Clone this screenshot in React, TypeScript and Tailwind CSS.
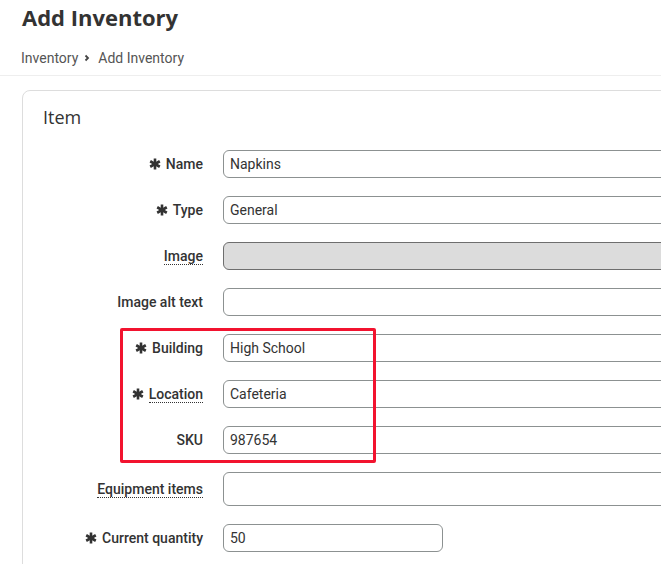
import React from "react";

function Star() {
  return (
    <svg width="12" height="12" viewBox="0 0 12 12" className="mr-[5px] shrink-0">
      <g stroke="#333" strokeWidth="2.6" strokeLinecap="butt">
        <line x1="6" y1="0.5" x2="6" y2="11.5" />
        <line x1="1.2" y1="3.25" x2="10.8" y2="8.75" />
        <line x1="1.2" y1="8.75" x2="10.8" y2="3.25" />
      </g>
    </svg>
  );
}

function Label({ text, req, dotted }: { text: string; req?: boolean; dotted?: boolean }) {
  return (
    <div className="w-[160px] shrink-0 flex justify-end items-center text-[14px] font-medium text-[#333]">
      {req && <Star />}
      <span className={dotted ? "border-b border-dotted border-[#333] leading-[16px]" : "leading-[16px]"}>{text}</span>
    </div>
  );
}

function Row({ label, req, dotted, value, disabled, tall, short }: { label: string; req?: boolean; dotted?: boolean; value?: string; disabled?: boolean; tall?: boolean; short?: boolean }) {
  return (
    <div className="flex items-center gap-[20px]">
      <Label text={label} req={req} dotted={dotted} />
      <div
        className={
          (short ? "w-[220px] " : "flex-1 ") +
          (tall ? "h-[34px] " : "h-[28px] ") +
          (disabled ? "bg-[#dcdcdc] border-[#6e6e6e] " : "bg-white border-[#8c9191] ") +
          "border rounded-[6px] px-[6px] flex items-center text-[14px] text-[#333]"
        }
      >
        {value}
      </div>
    </div>
  );
}

export default function App() {
  return (
    <div className="w-[661px] h-[564px] overflow-hidden bg-white font-['Roboto',sans-serif]">
      <div className="px-[22px] pt-[3px]">
        <h1 className="text-[22px] leading-[28px] font-bold text-[#333] font-['Open_Sans',sans-serif]">Add Inventory</h1>
        <div className="mt-[17px] flex items-center text-[14px] text-[#555] -ml-[1px] leading-[20px]">
          <span>Inventory</span>
          <svg width="12" height="12" viewBox="0 0 12 12" className="ml-[3px] mr-[5px]">
            <path d="M4.5 3.5 L7 6 L4.5 8.5" fill="none" stroke="#444" strokeWidth="1.8" />
          </svg>
          <span>Add Inventory</span>
        </div>
      </div>
      <div className="mt-[7px] border-t border-[#eee]" />
      <div className="relative ml-[22px] mt-[14px] w-[700px] border border-[#ddd] rounded-[8px] pl-[20px] pt-[14px] pb-[40px]">
        <h2 className="text-[18px] leading-[24px] text-[#333] font-['Open_Sans',sans-serif]">Item</h2>
        <div className="mt-[21px] flex flex-col gap-[18px]">
          <Row label="Name" req value="Napkins" />
          <Row label="Type" req value="General" />
          <Row label="Image" dotted disabled />
          <Row label="Image alt text" />
          <Row label="Building" req value="High School" />
          <Row label="Location" req dotted value="Cafeteria" />
          <Row label="SKU" value="987654" />
          <Row label="Equipment items" dotted tall />
          <Row label="Current quantity" req value="50" short />
        </div>
        <div className="absolute left-[97px] top-[237px] w-[256px] h-[135px] border-[3px] border-[#f2132f] rounded-[2px]" />
      </div>
    </div>
  );
}
